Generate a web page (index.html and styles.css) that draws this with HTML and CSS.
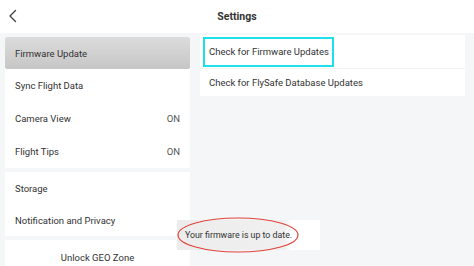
FILE: index.html
```html
<!DOCTYPE html>
<html>
<head>
<meta charset="utf-8">
<link rel="stylesheet" href="styles.css">
</head>
<body>
<div class="app">
  <header class="topbar">
    <svg class="back" width="10" height="14" viewBox="0 0 10 14"><path d="M7.5 1.5 L2 7 L7.5 12.5" fill="none" stroke="#444" stroke-width="1.4" stroke-linecap="round" stroke-linejoin="round"/></svg>
    <div class="title">Settings</div>
  </header>
  <main class="content">
    <nav class="sidebar">
      <div class="group g1">
        <div class="item active">Firmware Update</div>
        <div class="item">Sync Flight Data</div>
        <div class="item"><span>Camera View</span><span class="val">ON</span></div>
        <div class="item"><span>Flight Tips</span><span class="val">ON</span></div>
      </div>
      <div class="group g2">
        <div class="item">Storage</div>
        <div class="item">Notification and Privacy</div>
      </div>
      <div class="group g3">
        <div class="item center">Unlock GEO Zone</div>
      </div>
    </nav>
    <section class="panel">
      <div class="row first">Check for Firmware Updates<span class="highlight"></span></div>
      <div class="row second">Check for FlySafe Database Updates</div>
    </section>
  </main>
  <div class="toast">Your firmware is up to date.</div>
  <svg class="ellipse" width="124" height="38" viewBox="0 0 124 38"><ellipse cx="62" cy="19" rx="60" ry="17" fill="none" stroke="#e0443a" stroke-width="1.2"/></svg>
</div>
</body>
</html>
```
FILE: styles.css
```css
* { box-sizing: border-box; }
html, body { margin: 0; padding: 0; }
body {
  width: 474px;
  height: 266px;
  overflow: hidden;
  background: #f4f6f8;
  font-family: Roboto, "Noto Sans", "Liberation Sans", sans-serif;
  color: #333;
  font-size: 9.5px;
}
.app { position: relative; width: 474px; height: 266px; }
.topbar {
  height: 33px;
  background: #fff;
  position: relative;
  display: flex;
  align-items: center;
  justify-content: center;
}
.back { position: absolute; left: 8px; top: 9px; }
.title { font-weight: bold; font-size: 10.5px; color: #333; margin-top: -1px; }
.content { display: flex; padding-left: 5px; }
.sidebar { width: 185px; display: flex; flex-direction: column; }
.group { background: #fff; }
.g1 { margin-top: 4px; }
.g2 { margin-top: 4px; }
.g3 { margin-top: 4px; }
.item {
  height: 33px;
  display: flex;
  align-items: center;
  justify-content: space-between;
  padding: 0 10px;
}
.item.active {
  height: 32px;
  background: linear-gradient(#dcdcdc, #c6c6c6);
  border-radius: 2px;
}
.g2 .item { height: 32px; }
.item.center { justify-content: center; height: 34px; }
.val { color: #555; }
.panel {
  margin-left: 10px;
  margin-top: 2px;
  width: 265px;
  background: #fff;
  align-self: flex-start;
}
.row {
  display: flex;
  align-items: center;
  padding: 0 9px;
  position: relative;
}
.row.first { border-bottom: 1px solid #f1f3f5; height: 34px; }
.row.second { height: 27px; }
.highlight {
  position: absolute;
  left: 3px;
  top: 2px;
  width: 131px;
  height: 30px;
  border: 2.5px solid #1ee0ec;
}
.toast {
  position: absolute;
  left: 177px;
  top: 220px;
  width: 143px;
  height: 30px;
  background: linear-gradient(90deg, #ececec 0%, #f0f0f0 75%, #fff 80%);
  display: flex;
  align-items: center;
  padding-left: 8px;
  color: #333;
  font-size: 8.8px;
}
.ellipse { position: absolute; left: 176px; top: 216px; }
```
